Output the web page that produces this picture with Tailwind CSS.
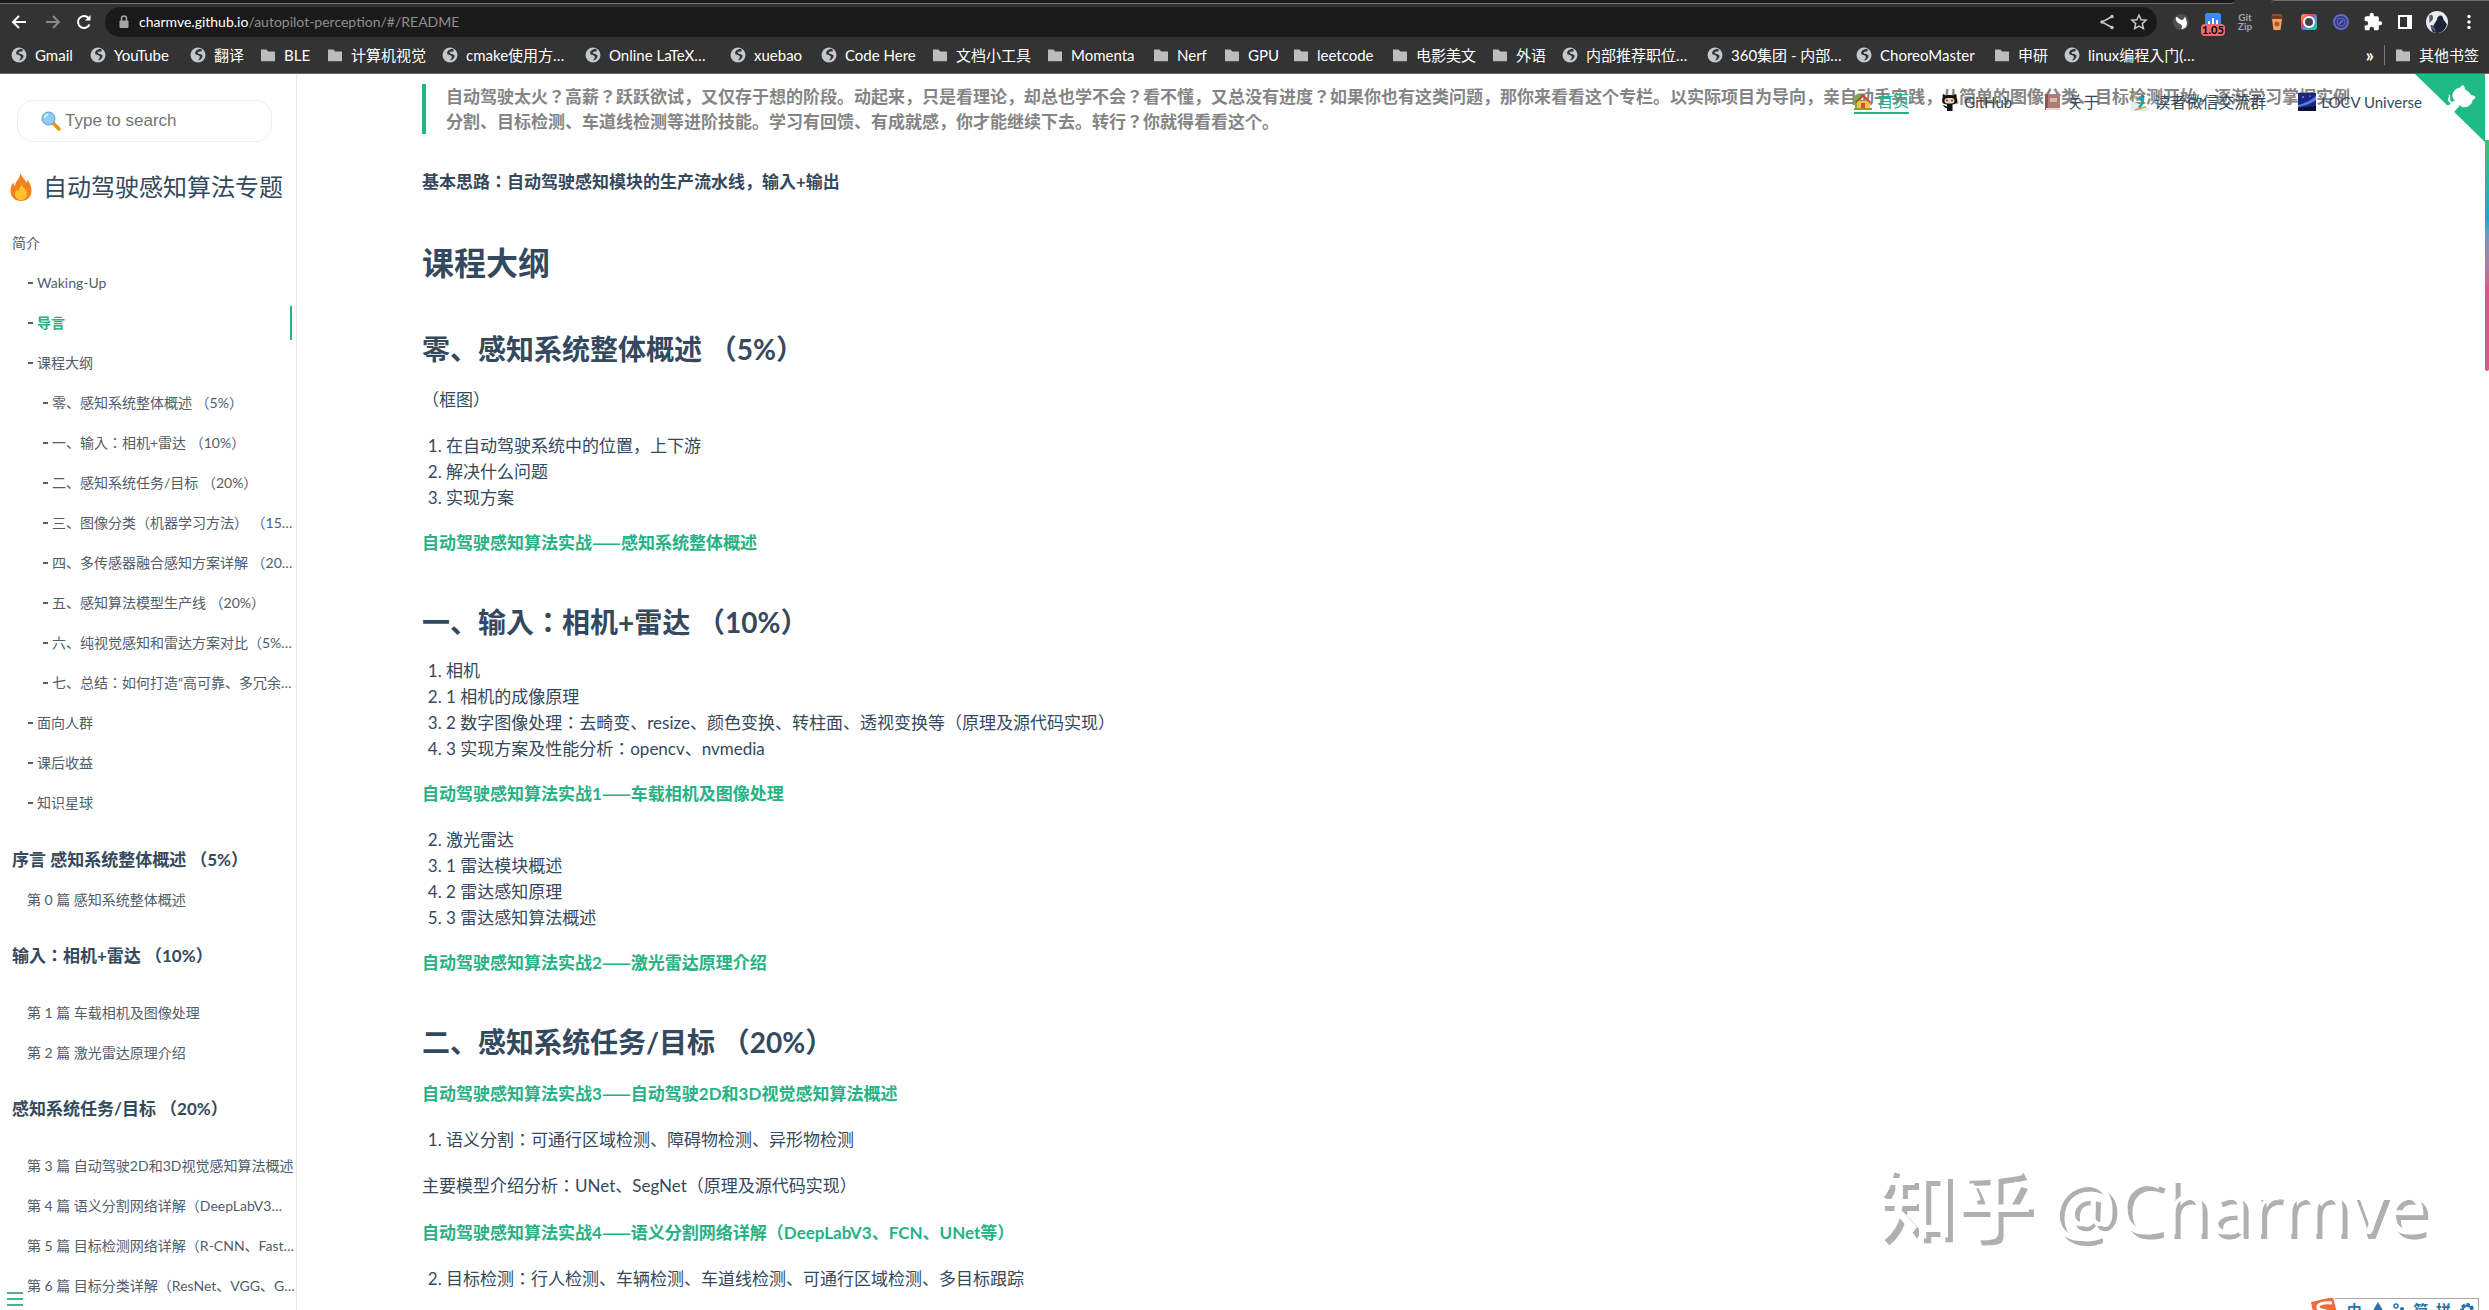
<!DOCTYPE html>
<html lang="en">
<head>
<meta charset="utf-8">
<title>自动驾驶感知算法专题</title>
<script src="https://cdn.jsdelivr.net/npm/@tailwindcss/browser@4"></script>
</head>
<body class="flex h-screen flex-col overflow-hidden bg-white font-[Lato,'Noto_Sans_CJK_JP',sans-serif] text-[17px] leading-[26px] text-[#34495e]">

<svg class="hidden" aria-hidden="true">
  <symbol id="globe" viewBox="0 0 16 16"><circle cx="8" cy="8" r="7.5" fill="#c4c7cb"/><path d="M8.600 2.200 6.200 3.600l-1.200 2 .6 1.800 2.300.6 1.900 1.300-.2 2-1.600 2.300 2.400-.8 1.800-2.200.4-2-1.800-1.400-2.700-.6-.5-1.300 1.700-.7 1.900-.2.8-1.400-1.400-1.200z" fill="#333"/></symbol>
  <symbol id="folder" viewBox="0 0 16 16"><path d="M1 2.500h5.400L8.200 4.500H15v9.700H1z" fill="#bdbdbd"/></symbol>
</svg>

<!-- Browser chrome -->
<header class="shrink-0 border-b border-[#666] bg-[#333] text-white">
  <div class="flex h-1 gap-9">
    <div class="flex-1 rounded-br border-b border-[#707070] bg-[#1b1b1b]"></div>
    <div class="w-[218px] rounded-tl border-t border-[#707070]"></div>
  </div>
  <div class="flex h-9 items-center pr-2">
    <div class="flex w-[105px] gap-3 pl-2.5">
      <button aria-label="Back"><svg class="size-5" viewBox="0 0 20 20" fill="none" stroke="#fff" stroke-width="2"><path d="M16 10H3M9 4l-6 6 6 6"/></svg></button>
      <button aria-label="Forward"><svg class="size-5" viewBox="0 0 20 20" fill="none" stroke="#8a8a8a" stroke-width="2"><path d="M4 10h13M11 4l6 6-6 6"/></svg></button>
      <button aria-label="Reload"><svg class="size-5" viewBox="0 0 20 20" fill="none" stroke="#fff" stroke-width="2"><path d="M15.500 12.500A6 6 0 1 1 14.500 6"/><path d="M16.500 3v5.500H11z" fill="#fff" stroke="none"/></svg></button>
    </div>
    <div class="flex h-[30px] flex-1 items-center rounded-full bg-[#1a1a1a] px-3">
      <svg class="mr-2 h-4 w-3.5" viewBox="0 0 14 16"><rect x="2.500" y="6.500" width="9" height="7.500" rx="1" fill="#a5a5a5"/><path d="M4.500 7V4.500a2.500 2.500 0 0 1 5 0V7" fill="none" stroke="#a5a5a5" stroke-width="1.500"/></svg>
      <div class="flex-1 text-[14px] leading-5">charmve.github.io<span class="text-[#8f8f8f]">/autopilot-perception/#/README</span></div>
      <button class="mr-3" aria-label="Share"><svg class="size-5" viewBox="0 0 20 20" fill="#c8c8c8" stroke="#c8c8c8" stroke-width="1.500"><path d="M15 4.500 5 10l10 5.500" fill="none"/><circle cx="15" cy="4.500" r="1"/><circle cx="5" cy="10" r="1"/><circle cx="15" cy="15.500" r="1"/></svg></button>
      <button aria-label="Bookmark this page"><svg class="-mr-1 size-5" viewBox="0 0 20 20" fill="none" stroke="#c8c8c8" stroke-width="1.500"><path d="m10 3 2.100 4.700 5 .5-3.800 3.400 1.100 5L10 14l-4.400 2.600 1.100-5L2.900 8.200l5-.5z"/></svg></button>
    </div>
    <div class="flex w-[324px] items-center gap-3 pl-3.5">
      <button aria-label="Extension"><svg class="size-5" viewBox="0 0 20 20"><circle cx="10" cy="10" r="8" fill="#505050"/><path d="M5 5c3 0 3 3 6 3 2 0 2-3 3-3 1 2 2 4 2 7 0 3-3 5-6 5 2-2 1-4-1-5S4 9 5 5z" fill="#fff"/></svg></button>
      <button class="relative" aria-label="Analytics"><svg class="size-5" viewBox="0 0 20 20"><rect x="2" y="1" width="16" height="17" rx="2" fill="#4285f4"/><path d="M6 12V9M10 12V6M14 12V8" stroke="#fff" stroke-width="2"/></svg><span class="absolute top-3 -left-0.5 h-3 w-6 rounded-sm bg-[#f0696d] text-center text-[11px] leading-3 font-bold text-black">1.05</span></button>
      <button class="w-5 text-[10px] leading-[9px] font-bold text-[#a5a5a5]">Git<br>Zip</button>
      <button aria-label="Coffee"><svg class="size-5" viewBox="0 0 20 20"><path d="M4 4h12v3H4z" fill="#6d3b2b"/><path d="M5 7h10l-1.500 11h-7z" fill="#f3a261"/><circle cx="10" cy="12" r="2.500" fill="#a95d2b"/><path d="M5 2h10v2H5z" fill="#8b4c37"/></svg></button>
      <button aria-label="Color picker"><svg class="size-5" viewBox="0 0 20 20"><defs><linearGradient id="ring" x1="0" y1="0" x2="1" y2="1"><stop offset="0" stop-color="#f6c026"/><stop offset=".35" stop-color="#f0386b"/><stop offset=".65" stop-color="#3b9df0"/><stop offset="1" stop-color="#2fd06b"/></linearGradient></defs><rect x="2" y="2" width="16" height="16" rx="3" fill="url(#ring)"/><circle cx="10" cy="10" r="5" fill="#444" stroke="#fff" stroke-width="2"/></svg></button>
      <button aria-label="Compass"><svg class="size-5" viewBox="0 0 20 20" fill="none" stroke="#6068c8"><circle cx="10" cy="10" r="7" stroke-width="2" fill="#343878"/><circle cx="10" cy="10" r="4"/><path d="m8 12 4-4" stroke-width="2"/></svg></button>
      <button aria-label="Extensions"><svg class="size-5" viewBox="0 0 24 24" fill="#fff"><path d="M20.500 11H19V7a2 2 0 0 0-2-2h-4V3.500a2.500 2.500 0 0 0-5 0V5H4a2 2 0 0 0-2 2v3.800h1.500a2.700 2.700 0 0 1 0 5.400H2V20a2 2 0 0 0 2 2h3.800v-1.500a2.700 2.700 0 0 1 5.400 0V22H17a2 2 0 0 0 2-2v-4h1.500a2.500 2.500 0 0 0 0-5z"/></svg></button>
      <button aria-label="Side panel"><svg class="size-5" viewBox="0 0 20 20"><path d="M4 4h12v12H4z" fill="none" stroke="#fff" stroke-width="2"/><path d="M12 4h4v12h-4z" fill="#fff"/></svg></button>
      <button aria-label="Profile"><svg class="size-5 scale-110" viewBox="0 0 20 20"><circle cx="10" cy="10" r="10" fill="#e9edf2"/><path d="M10 8c0-3 3-5 5-3l1 3 3 4c-1 4-4 8-9 8-3 0-5-1-5-4z" fill="#1c2236"/><path d="M3 4c3-2 4 1 3 4l-3 3zM4 13c2-1 3 1 4 3l1 3c-3-1-5-3-5-6z" fill="#50586c"/></svg></button>
      <button aria-label="Menu"><svg class="size-5" viewBox="0 0 20 20" fill="#fff"><circle cx="10" cy="4.500" r="1.700"/><circle cx="10" cy="10" r="1.700"/><circle cx="10" cy="15.500" r="1.700"/></svg></button>
    </div>
  </div>
  <nav class="flex h-[33px] items-center pr-2.5 pb-1 pl-[11px] text-[15px] leading-6 whitespace-nowrap">
    <a href="#" class="flex w-[79px] items-center gap-2"><svg class="size-4 shrink-0"><use href="#globe"/></svg>Gmail</a>
    <a href="#" class="flex w-[100px] items-center gap-2"><svg class="size-4 shrink-0"><use href="#globe"/></svg>YouTube</a>
    <a href="#" class="flex w-[70px] items-center gap-2"><svg class="size-4 shrink-0"><use href="#globe"/></svg>翻译</a>
    <a href="#" class="flex w-[67px] items-center gap-2"><svg class="size-4 shrink-0"><use href="#folder"/></svg>BLE</a>
    <a href="#" class="flex w-[115px] items-center gap-2"><svg class="size-4 shrink-0"><use href="#folder"/></svg>计算机视觉</a>
    <a href="#" class="flex w-[143px] items-center gap-2"><svg class="size-4 shrink-0"><use href="#globe"/></svg>cmake使用方…</a>
    <a href="#" class="flex w-[145px] items-center gap-2"><svg class="size-4 shrink-0"><use href="#globe"/></svg>Online LaTeX…</a>
    <a href="#" class="flex w-[91px] items-center gap-2"><svg class="size-4 shrink-0"><use href="#globe"/></svg>xuebao</a>
    <a href="#" class="flex w-[111px] items-center gap-2"><svg class="size-4 shrink-0"><use href="#globe"/></svg>Code Here</a>
    <a href="#" class="flex w-[115px] items-center gap-2"><svg class="size-4 shrink-0"><use href="#folder"/></svg>文档小工具</a>
    <a href="#" class="flex w-[106px] items-center gap-2"><svg class="size-4 shrink-0"><use href="#folder"/></svg>Momenta</a>
    <a href="#" class="flex w-[71px] items-center gap-2"><svg class="size-4 shrink-0"><use href="#folder"/></svg>Nerf</a>
    <a href="#" class="flex w-[69px] items-center gap-2"><svg class="size-4 shrink-0"><use href="#folder"/></svg>GPU</a>
    <a href="#" class="flex w-[99px] items-center gap-2"><svg class="size-4 shrink-0"><use href="#folder"/></svg>leetcode</a>
    <a href="#" class="flex w-[100px] items-center gap-2"><svg class="size-4 shrink-0"><use href="#folder"/></svg>电影美文</a>
    <a href="#" class="flex w-[70px] items-center gap-2"><svg class="size-4 shrink-0"><use href="#folder"/></svg>外语</a>
    <a href="#" class="flex w-[145px] items-center gap-2"><svg class="size-4 shrink-0"><use href="#globe"/></svg>内部推荐职位…</a>
    <a href="#" class="flex w-[149px] items-center gap-2"><svg class="size-4 shrink-0"><use href="#globe"/></svg>360集团 - 内部…</a>
    <a href="#" class="flex w-[138px] items-center gap-2"><svg class="size-4 shrink-0"><use href="#globe"/></svg>ChoreoMaster</a>
    <a href="#" class="flex w-[70px] items-center gap-2"><svg class="size-4 shrink-0"><use href="#folder"/></svg>申研</a>
    <a href="#" class="flex flex-1 items-center gap-2"><svg class="size-4 shrink-0"><use href="#globe"/></svg>linux编程入门(…</a>
    <button class="mr-2.5 text-lg font-bold" aria-label="More bookmarks">»</button>
    <a href="#" class="flex items-center gap-2 border-l border-[#777] pl-2.5 leading-5"><svg class="size-4 shrink-0"><use href="#folder"/></svg>其他书签</a>
  </nav>
</header>

<!-- Page -->
<div class="relative flex min-h-0 flex-1">
  <aside class="relative w-[297px] shrink-0 overflow-hidden border-r border-[#e8e8e8] text-[14px] text-[#505d6b]">
    <div class="pt-[26px] pl-[17px]">
      <label class="flex h-[42px] w-[255px] items-center gap-1 rounded-2xl border border-[#eee] pl-[23px]">
        <svg class="size-5 shrink-0" viewBox="0 0 20 20"><path d="m12 12 6 6" stroke="#e8950c" stroke-width="3.500" stroke-linecap="round"/><circle cx="7.500" cy="7.500" r="6.500" fill="#8fcdf5" stroke="#6b9fc0"/><path d="M4 7a3.500 3.500 0 0 1 3-3.500" stroke="#dff2ff" stroke-width="1.500" fill="none"/></svg>
        <input type="search" placeholder="Type to search" aria-label="Search" class="w-44 font-['Liberation_Sans',sans-serif] text-[17px] outline-none placeholder:text-[#757575]">
      </label>
    </div>
    <h1 class="mt-[25px] flex h-10 items-center gap-[11px] pl-2.5 text-[24px] whitespace-nowrap text-[#34495e]">
      <svg class="h-7 w-[22px] shrink-0" viewBox="0 0 22 28"><path d="M10.500 0c1 4 5 6.500 6 10 .8-1 .8-2.500.5-3.500 3 3 4.500 7 4.500 11.500C21.500 24 17 28 11 28S.5 24 .5 18c0-4 1-6.500 3-8.500 0 1.500.5 2.500 1.500 3.500C5 8 10 6 10.500 0z" fill="#f4801f"/><path d="M11.500 11c.5 3 5.500 5 5.500 10 0 3.500-2.500 6-6 6s-6-2.500-6-6c0-2 .8-3.500 2-4.500.2 1 .7 1.500 1.500 2 .2-3 2.500-4.500 3-7.500z" fill="#fdc22d"/></svg>
      <a href="#">自动驾驶感知算法专题</a>
    </h1>
    <nav class="mt-4 leading-10 whitespace-nowrap">
      <a href="#" class="block pl-3">简介</a>
      <ul>
        <li class="flex gap-1 pl-7 before:h-0.5 before:w-[5px] before:shrink-0 before:self-center before:bg-[#505d6b]"><a href="#">Waking-Up</a></li>
        <li class="flex items-center gap-1 pr-1 pl-7 before:h-0.5 before:w-[5px] before:shrink-0 before:self-center before:bg-[#505d6b]"><a href="#" class="flex-1 font-bold text-[#26b285]">导言</a><span class="h-[34px] border-r-2 border-[#26b285]"></span></li>
        <li class="flex gap-1 pl-7 before:h-0.5 before:w-[5px] before:shrink-0 before:self-center before:bg-[#505d6b]"><a href="#">课程大纲</a></li>
        <li class="flex gap-1 pl-[43px] before:h-0.5 before:w-[5px] before:shrink-0 before:self-center before:bg-[#505d6b]"><a href="#">零、感知系统整体概述 （5%）</a></li>
        <li class="flex gap-1 pl-[43px] before:h-0.5 before:w-[5px] before:shrink-0 before:self-center before:bg-[#505d6b]"><a href="#">一、输入：相机+雷达 （10%）</a></li>
        <li class="flex gap-1 pl-[43px] before:h-0.5 before:w-[5px] before:shrink-0 before:self-center before:bg-[#505d6b]"><a href="#">二、感知系统任务/目标 （20%）</a></li>
        <li class="flex gap-1 pl-[43px] before:h-0.5 before:w-[5px] before:shrink-0 before:self-center before:bg-[#505d6b]"><a href="#">三、图像分类（机器学习方法） （15…</a></li>
        <li class="flex gap-1 pl-[43px] before:h-0.5 before:w-[5px] before:shrink-0 before:self-center before:bg-[#505d6b]"><a href="#">四、多传感器融合感知方案详解 （20…</a></li>
        <li class="flex gap-1 pl-[43px] before:h-0.5 before:w-[5px] before:shrink-0 before:self-center before:bg-[#505d6b]"><a href="#">五、感知算法模型生产线 （20%）</a></li>
        <li class="flex gap-1 pl-[43px] before:h-0.5 before:w-[5px] before:shrink-0 before:self-center before:bg-[#505d6b]"><a href="#">六、纯视觉感知和雷达方案对比（5%…</a></li>
        <li class="flex gap-1 pl-[43px] before:h-0.5 before:w-[5px] before:shrink-0 before:self-center before:bg-[#505d6b]"><a href="#">七、总结：如何打造“高可靠、多冗余…</a></li>
        <li class="flex gap-1 pl-7 before:h-0.5 before:w-[5px] before:shrink-0 before:self-center before:bg-[#505d6b]"><a href="#">面向人群</a></li>
        <li class="flex gap-1 pl-7 before:h-0.5 before:w-[5px] before:shrink-0 before:self-center before:bg-[#505d6b]"><a href="#">课后收益</a></li>
        <li class="flex gap-1 pl-7 before:h-0.5 before:w-[5px] before:shrink-0 before:self-center before:bg-[#505d6b]"><a href="#">知识星球</a></li>
      </ul>
      <h2 class="mt-[17px] pl-3 text-[17px] leading-10 font-bold text-[#34495e]">序言 感知系统整体概述 （5%）</h2>
      <a href="#" class="block pl-[27px]">第 0 篇 感知系统整体概述</a>
      <h2 class="mt-4 pl-3 text-[17px] leading-10 font-bold text-[#34495e]">输入：相机+雷达 （10%）</h2>
      <ul class="mt-[17px] pl-[27px]">
        <li><a href="#">第 1 篇 车载相机及图像处理</a></li>
        <li><a href="#">第 2 篇 激光雷达原理介绍</a></li>
      </ul>
      <h2 class="mt-4 pl-3 text-[17px] leading-10 font-bold text-[#34495e]">感知系统任务/目标 （20%）</h2>
      <ul class="mt-[17px] pl-[27px]">
        <li><a href="#">第 3 篇 自动驾驶2D和3D视觉感知算法概述</a></li>
        <li><a href="#">第 4 篇 语义分割网络详解（DeepLabV3…</a></li>
        <li><a href="#">第 5 篇 目标检测网络详解（R-CNN、Fast…</a></li>
        <li><a href="#">第 6 篇 目标分类详解（ResNet、VGG、G…</a></li>
      </ul>
    </nav>
    <button class="absolute bottom-0 left-0 flex h-6 w-[26px] flex-col gap-1 bg-white/70 pt-1.5 pl-[7px]" aria-label="Toggle sidebar">
      <span class="h-0.5 w-4 bg-[#42b983]"></span><span class="h-0.5 w-4 bg-[#42b983]"></span><span class="h-0.5 w-4 bg-[#42b983]"></span>
    </button>
  </aside>

  <main class="min-w-0 flex-1 overflow-hidden px-[125px] pt-2.5">
    <blockquote class="border-l-4 border-[#26b285] pl-5 leading-[25px] font-semibold text-[#858585]">自动驾驶太火？高薪？跃跃欲试，又仅存于想的阶段。动起来，只是看理论，却总也学不会？看不懂，又总没有进度？如果你也有这类问题，那你来看看这个专栏。以实际项目为导向，亲自动手实践，从简单的图像分类、目标检测开始，逐渐学习掌握实例分割、目标检测、车道线检测等进阶技能。学习有回馈、有成就感，你才能继续下去。转行？你就得看看这个。</blockquote>
    <p class="mt-[35px] font-bold">基本思路：自动驾驶感知模块的生产流水线，输入+输出</p>
    <h2 class="mt-12 text-[32px] leading-10 font-bold">课程大纲</h2>

    <h3 class="mt-12 text-[28px] leading-9 font-bold">零、感知系统整体概述 （5%）</h3>
    <p class="mt-5">（框图）</p>
    <ol class="mt-5 list-decimal pl-6">
      <li>在自动驾驶系统中的位置，上下游</li>
      <li>解决什么问题</li>
      <li>实现方案</li>
    </ol>
    <p class="mt-[18px] font-bold text-[#26b285]"><a href="#">自动驾驶感知算法实战<span class="font-['Noto_Sans_CJK_JP',sans-serif]">——</span>感知系统整体概述</a></p>

    <h3 class="mt-12 text-[28px] leading-9 font-bold">一、输入：相机+雷达 （10%）</h3>
    <ol class="mt-[18px] list-decimal pl-6">
      <li>相机</li>
      <li>1 相机的成像原理</li>
      <li>2 数字图像处理：去畸变、resize、颜色变换、转柱面、透视变换等（原理及源代码实现）</li>
      <li>3 实现方案及性能分析：opencv、nvmedia</li>
    </ol>
    <p class="mt-[18px] font-bold text-[#26b285]"><a href="#">自动驾驶感知算法实战1<span class="font-['Noto_Sans_CJK_JP',sans-serif]">——</span>车载相机及图像处理</a></p>
    <ol class="mt-5 list-decimal pl-6" start="2">
      <li>激光雷达</li>
      <li>1 雷达模块概述</li>
      <li>2 雷达感知原理</li>
      <li>3 雷达感知算法概述</li>
    </ol>
    <p class="mt-[18px] font-bold text-[#26b285]"><a href="#">自动驾驶感知算法实战2<span class="font-['Noto_Sans_CJK_JP',sans-serif]">——</span>激光雷达原理介绍</a></p>

    <h3 class="mt-12 text-[28px] leading-9 font-bold">二、感知系统任务/目标 （20%）</h3>
    <p class="mt-5 font-bold text-[#26b285]"><a href="#">自动驾驶感知算法实战3<span class="font-['Noto_Sans_CJK_JP',sans-serif]">——</span>自动驾驶2D和3D视觉感知算法概述</a></p>
    <ol class="mt-5 list-decimal pl-6">
      <li>语义分割：可通行区域检测、障碍物检测、异形物检测</li>
    </ol>
    <p class="mt-5">主要模型介绍分析：UNet、SegNet（原理及源代码实现）</p>
    <p class="mt-5 font-bold text-[#26b285]"><a href="#">自动驾驶感知算法实战4<span class="font-['Noto_Sans_CJK_JP',sans-serif]">——</span>语义分割网络详解（DeepLabV3、FCN、UNet等）</a></p>
    <ol class="mt-5 list-decimal pl-6" start="2">
      <li>目标检测：行人检测、车辆检测、车道线检测、可通行区域检测、多目标跟踪</li>
    </ol>
  </main>

  <!-- Page scrollbar -->
  <div class="w-1 shrink-0 pt-[66px]"><div class="h-[231px] rounded-b bg-linear-to-b from-[#42c06e] via-[#18a8d0] via-35% to-[#d05a8c] to-65%"></div></div>

  <!-- Top navigation, laid over the article -->
  <nav class="absolute top-4 right-[67px] flex gap-8 text-[16px] leading-[26px] whitespace-nowrap">
    <a href="#" class="flex h-6 items-center gap-[5px] border-b-2 border-[#26b285] text-[#26b285]"><svg class="size-[18px]" viewBox="0 0 18 18"><path d="M0 7c0-3 2-5 4-5s3 2 3 4v10H1z" fill="#6ab344"/><path d="M3 9h13v8H3z" fill="#f4c04e"/><path d="m1 10 8-8 8 8-1.500 1L9 5l-6.500 6z" fill="#c6472e"/><path d="M7 11h4v6H7z" fill="#d6502f"/><path d="M0 16h18v2H0z" fill="#8a9c3b"/></svg>首页</a>
    <a href="#" class="flex h-6 items-center gap-[5px] text-[15px]"><svg class="size-[18px]" viewBox="0 0 18 18"><path d="M2 1l3 1.500c2-.6 5-.6 7 0L15 1c.8 1.500.6 3 .5 3.500C17.500 8 16 11 11.500 11.500V18H6v-3c-3 0-3-2-4-3 2 0 2 1.500 4 1.500v-2C1.500 11 0 8 1.800 4.500 1.500 3.500 1.500 2 2 1z" fill="#111"/><rect x="3.500" y="5" width="10" height="5.500" rx="2.700" fill="#f0cdb5"/><circle cx="6" cy="7.500" r="1" fill="#6b3a28"/><circle cx="11" cy="7.500" r="1" fill="#6b3a28"/></svg>GitHub</a>
    <a href="#" class="flex h-6 items-center gap-[5px]"><svg class="size-[18px]" viewBox="0 0 18 18"><path d="M1 1h15v16H1z" fill="#b07a75"/><path d="M1 1h3v16H1z" fill="#8f5854"/><path d="M6 5h7v4H6z" fill="#dcb5a9"/><path d="M2 15h14v2H2z" fill="#e7dcd5"/></svg>关于</a>
    <a href="#" class="flex h-6 items-center gap-[5px]"><svg class="size-[18px]" viewBox="0 0 18 18"><path d="M0 8l18 7v3H0z" fill="#e3eff8"/><path d="M7 5l5 2-1 4-3 4" stroke="#1ba39c" stroke-width="2.500" fill="none"/><circle cx="11.500" cy="3.500" r="1.800" fill="#267f98"/><path d="M1 1l4 5M4 17l11-3" stroke="#e69b3b" stroke-width="1.300"/></svg>读者微信交流群</a>
    <a href="#" class="flex h-6 items-center gap-[5px] text-[15px]"><svg class="size-[18px]" viewBox="0 0 18 18"><path d="M0 0h18v18H0z" fill="#1b2683"/><path d="M0 12C5 11 12 8 18 3v4C12 11 6 13 0 14z" fill="#5a7be0"/><path d="M0 15l18-2v5H0z" fill="#0a0e30"/><circle cx="5" cy="4" r=".7" fill="#fff"/><circle cx="12" cy="3" r=".6" fill="#fff"/></svg>LOCV Universe</a>
  </nav>
  <a href="#" class="absolute top-0 right-1" aria-label="View source on GitHub">
    <svg class="h-[68px] w-[70px]" viewBox="0 0 250 250" preserveAspectRatio="none"><path d="M0 0l115 115h15l12 27 108 108V0z" fill="#1fba86"/><path d="M128.300 109c-14.500-9.300-9.300-19.400-9.300-19.400 3-6.900 1.500-11 1.500-11-1.300-6.600 2.900-2.300 2.900-2.300 3.900 4.600 2.100 11 2.100 11-2.600 10.300 5.100 14.600 8.900 15.900M115 115c-.1.100 3.700 1.500 4.800.4l13.900-13.800c3.200-2.400 6.200-3.200 8.500-3-8.400-10.600-14.700-24.200 1.600-40.600 4.700-4.600 10.200-6.800 15.900-7 .6-1.600 3.500-7.400 11.700-10.900 0 0 4.700 2.400 7.400 16.100 4.300 2.400 8.400 5.600 12.100 9.200 3.600 3.600 6.800 7.800 9.200 12.200 13.700 2.600 16.200 7.300 16.200 7.300-3.600 8.200-9.400 11.100-10.900 11.700-.3 5.800-2.400 11.200-7.100 15.900-16.400 16.400-30 10-40.600 1.600.2 2.800-1 6.800-5 10.800L141 136.500c-1.200 1.200.6 5.400.8 5.300z" fill="#fff"/></svg>
  </a>

  <!-- Author watermark -->
  <div class="pointer-events-none absolute right-[62px] bottom-[54px] font-['Noto_Sans_CJK_JP',sans-serif] text-[78px] leading-[100px] font-medium whitespace-nowrap text-white [text-shadow:5px_5px_0_#b0b0b0]">知乎 <span class="font-['Open_Sans',sans-serif] text-[74px]">@Charmve</span></div>

  <!-- Input method bar -->
  <div class="absolute right-2.5 bottom-0 flex h-3 w-[168px] items-start justify-between overflow-hidden pr-1 font-['Noto_Sans_CJK_JP',sans-serif] text-[15px] leading-[24px] font-bold text-[#2c72a8]">
    <span class="absolute inset-0 left-6 border-t border-r border-[#aaa]"></span>
    <svg class="h-6 w-7 shrink-0" viewBox="0 0 28 24"><path d="M0 4 22-1l6 24H4z" fill="#ee6b3b"/><path d="M21 5C12 4 6 6 7 10c1 3 12 2 13 6" stroke="#fff" stroke-width="3" fill="none"/></svg>
    <span>中</span>
    <svg class="h-6 w-4" viewBox="0 0 16 24" fill="#2c72a8"><path d="M8 4l3 5 3 6H2l3-6z"/></svg>
    <svg class="h-6 w-3" viewBox="0 0 12 24" fill="#2c72a8"><circle cx="3" cy="8" r="2" fill="none" stroke="#2c72a8" stroke-width="1.500"/><circle cx="9" cy="11" r="2"/></svg>
    <span>简</span><span>拼</span>
    <svg class="h-6 w-4" viewBox="0 0 16 24"><circle cx="8" cy="12" r="5" fill="none" stroke="#2c72a8" stroke-width="4" stroke-dasharray="3 1.500"/><circle cx="8" cy="12" r="4.500" fill="none" stroke="#2c72a8" stroke-width="2"/></svg>
  </div>
</div>
</body>
</html>
